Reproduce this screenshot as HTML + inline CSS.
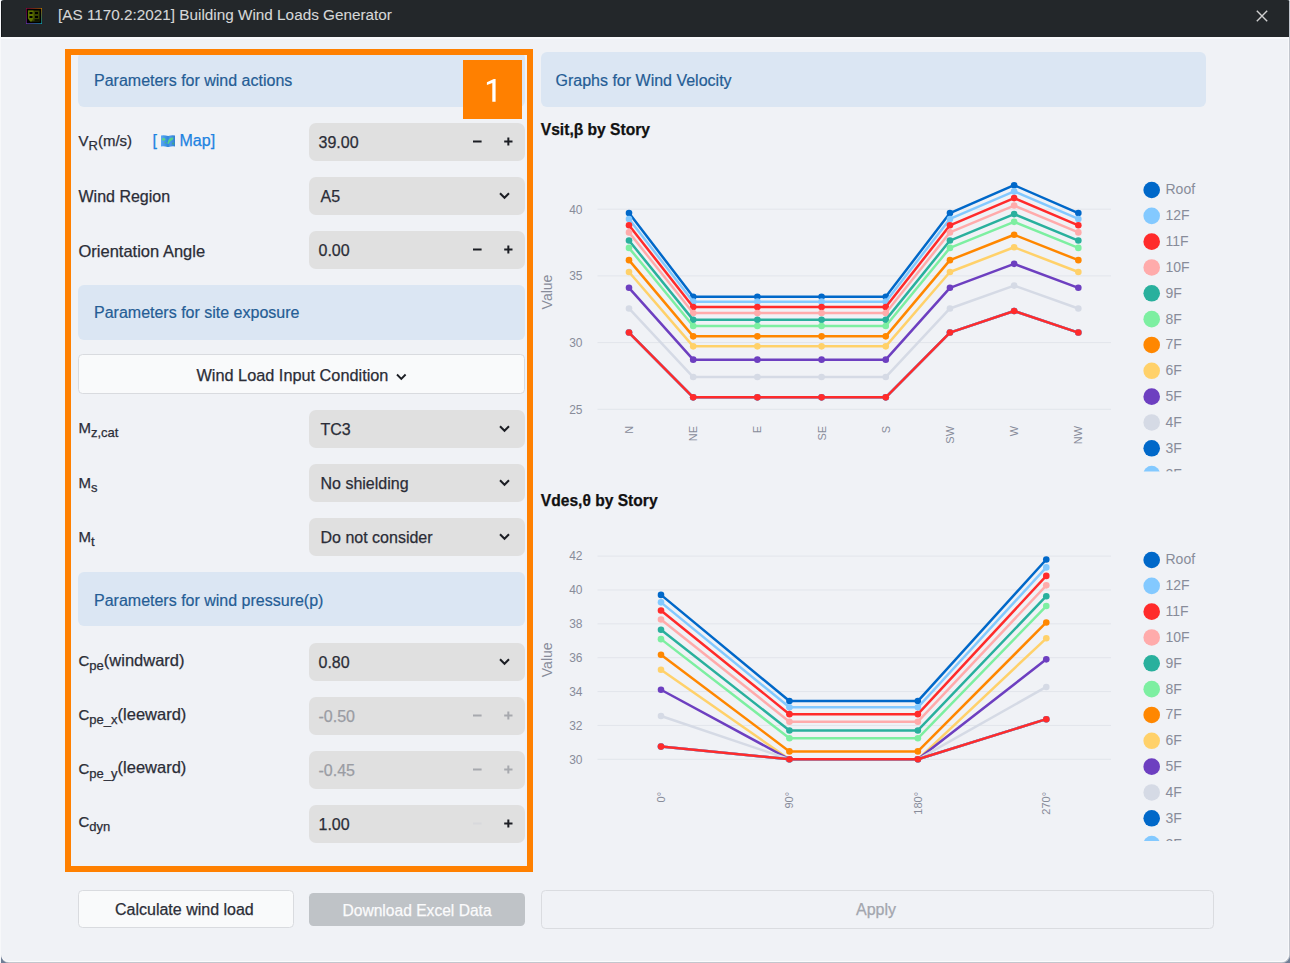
<!DOCTYPE html>
<html><head><meta charset="utf-8">
<style>
html,body{margin:0;padding:0;}
body{width:1290px;height:963px;position:relative;overflow:hidden;background:#f7f8fa;font-family:"Liberation Sans",sans-serif;}
.win{position:absolute;left:1px;top:0;width:1289px;height:963px;background:#6f7e96;border-radius:3px 3px 0 0;overflow:hidden;}
.frame{position:absolute;left:1px;top:0;width:1289px;height:963px;background:#c2c6cd;border-radius:3px 3px 8px 8px;overflow:hidden;}
.main{position:absolute;left:0;top:37px;width:1288px;height:925px;background:#f0f2f6;border-radius:0 0 8px 8px;box-shadow:inset 0 2px 0 #f8f9fb, inset 0 -1px 0 #fafbfc, inset -1px 0 0 #f8f9fb;}
.titlebar{position:absolute;left:0;top:0;width:1288px;height:37px;background:#23272a;box-shadow:inset 1px 0 0 #15181b;}
.t{position:absolute;white-space:nowrap;line-height:1;color:#2b2d37;-webkit-text-stroke:0.25px currentColor;}
.hdr{position:absolute;left:78px;width:447px;background:#dbe6f3;border-radius:6px;}
.hdr span{position:absolute;left:16px;white-space:nowrap;line-height:1;font-size:16px;color:#255d95;-webkit-text-stroke:0.2px currentColor;}
.inp{position:absolute;left:308.5px;width:216.5px;height:38px;background:#e0e0e0;border-radius:7px;}
.inp .v{position:absolute;left:10px;top:12.3px;font-size:16px;line-height:1;color:#2b2d37;-webkit-text-stroke:0.25px currentColor;white-space:nowrap;}
.inp .dis{color:#9a9ca3;}
.lab{position:absolute;left:78.5px;white-space:nowrap;line-height:1;color:#2b2d37;font-size:15px;-webkit-text-stroke:0.25px currentColor;}
.lab sub{font-size:13px;vertical-align:baseline;position:relative;top:4px;}
.pr{font-size:16.5px;position:relative;top:-0.3px;}
.btn{position:absolute;border-radius:4.5px;box-sizing:border-box;}
</style></head>
<body>
<div class="win"></div>
<div class="frame">
  <div class="titlebar"></div>
  <div class="main"></div>
</div>
<!-- title icon -->
<svg style="position:absolute;left:26px;top:8px" width="16" height="16" viewBox="0 0 16 16">
  <defs><linearGradient id="igt" x1="0" y1="0" x2="1" y2="0"><stop offset="0" stop-color="#9a0040"/><stop offset="1" stop-color="#c87a00"/></linearGradient>
  <linearGradient id="igr" x1="0" y1="0" x2="0" y2="1"><stop offset="0" stop-color="#c87a00"/><stop offset="1" stop-color="#00a0a8"/></linearGradient>
  <linearGradient id="igb" x1="0" y1="0" x2="1" y2="0"><stop offset="0" stop-color="#6a30b0"/><stop offset="1" stop-color="#10a0b8"/></linearGradient>
  <linearGradient id="igl" x1="0" y1="0" x2="0" y2="1"><stop offset="0" stop-color="#9a0040"/><stop offset="1" stop-color="#6a30b0"/></linearGradient></defs>
  <rect x="0" y="0" width="16" height="16" rx="1" fill="#000"/>
  <rect x="0" y="0" width="16" height="0.9" fill="url(#igt)" opacity="0.7"/>
  <rect x="15.1" y="0" width="0.9" height="16" fill="url(#igr)" opacity="0.8"/>
  <rect x="0" y="15.1" width="16" height="0.9" fill="url(#igb)" opacity="0.8"/>
  <rect x="0" y="0" width="0.9" height="16" fill="url(#igl)" opacity="0.7"/>
  <path d="M2 2.5H13.5V13.5H2z" fill="#384400"/>
  <path d="M2 2.5H7.5V10L5.5 13.5H2z" fill="#5e7400"/>
  <rect x="3.5" y="4" width="3" height="2" fill="#000"/><rect x="9" y="4" width="3" height="2" fill="#000"/>
  <rect x="3.5" y="8" width="3" height="2" fill="#000"/><rect x="9" y="8" width="3" height="2" fill="#000"/>
  <path d="M2 10.5L4.5 14H2z" fill="#000"/><rect x="8.5" y="11" width="5" height="2.5" fill="#101400"/>
</svg>
<div class="t" style="left:58px;top:7.2px;font-size:15.3px;color:#d6d7d8;-webkit-text-stroke:0.1px currentColor;">[AS 1170.2:2021] Building Wind Loads Generator</div>
<svg style="position:absolute;left:1256px;top:10px" width="12" height="12" viewBox="0 0 12 12"><path d="M0.8 0.8L11.2 11.2M11.2 0.8L0.8 11.2" stroke="#d0d0d0" stroke-width="1.4"/></svg>

<!-- left panel -->
<div class="hdr" style="top:52px;height:55px;"><span style="top:20.9px;">Parameters for wind actions</span></div>

<div class="lab" style="top:133.4px;">V<sub>R</sub>(m/s)</div>
<div class="t" style="left:152.5px;top:132.6px;font-size:16px;color:#1c83e1;">[</div>
<svg style="position:absolute;left:161px;top:134.8px" width="14" height="12.5" viewBox="0 0 14 12.5"><defs><linearGradient id="mg" x1="0" y1="0" x2="1" y2="0"><stop offset="0" stop-color="#5aa8f6"/><stop offset="0.5" stop-color="#2f88da"/><stop offset="0.65" stop-color="#4d98ec"/><stop offset="1" stop-color="#2f7fd0"/></linearGradient></defs><path d="M0 0.4Q3.5 -0.3 7.2 1Q10.5 -0.3 14 0.4V11.4Q10.5 10.8 7.2 12.3Q3.5 10.8 0 11.4Z" fill="url(#mg)"/><ellipse cx="2.6" cy="4.2" rx="1.7" ry="1.5" fill="#5cd08e"/><ellipse cx="4.4" cy="7.8" rx="0.9" ry="0.8" fill="#48b888"/><path d="M6.3 8.5Q6.5 5 9 3.2Q11 2.2 12.4 2.8Q12.5 5 10.5 5.6Q8.5 6.5 7.6 8.9Z" fill="#58d28a"/><ellipse cx="12.2" cy="8.6" rx="1.2" ry="1.1" fill="#3aa890"/></svg>
<div class="t" style="left:179.5px;top:132.6px;font-size:16px;color:#1c83e1;">Map]</div>
<div class="inp" style="top:123px;"><div class="v">39.00</div><svg style="position:absolute;right:12px;top:14px" width="40" height="9" viewBox="0 0 40 9"><path d="M0 4.5h8.6" stroke="#1c1e24" stroke-width="2"/><path d="M31.2 4.5h8.3M35.35 0.6v7.8" stroke="#1c1e24" stroke-width="2"/></svg></div>

<div class="t" style="left:78.5px;top:189.4px;font-size:16px;">Wind Region</div>
<div class="inp" style="top:177px;"><div class="v" style="left:12px">A5</div><svg style="position:absolute;left:190.8px;top:15.2px" width="11" height="8" viewBox="0 0 11 8"><path d="M1 1.3L5.5 5.8L10 1.3" fill="none" stroke="#1c1e24" stroke-width="2"/></svg></div>

<div class="t" style="left:78.5px;top:242.7px;font-size:16.5px;">Orientation Angle</div>
<div class="inp" style="top:231px;"><div class="v">0.00</div><svg style="position:absolute;right:12px;top:14px" width="40" height="9" viewBox="0 0 40 9"><path d="M0 4.5h8.6" stroke="#1c1e24" stroke-width="2"/><path d="M31.2 4.5h8.3M35.35 0.6v7.8" stroke="#1c1e24" stroke-width="2"/></svg></div>

<div class="hdr" style="top:285px;height:54.5px;"><span style="top:20.4px;">Parameters for site exposure</span></div>

<div class="btn" style="left:78px;top:354.3px;width:447px;height:39.3px;background:#f9fafb;border:1px solid #d9dbdf;"></div>
<div class="t" style="left:196.5px;top:367.4px;font-size:16.3px;">Wind Load Input Condition</div>
<svg style="position:absolute;left:395.8px;top:372.6px" width="11" height="8" viewBox="0 0 11 8"><path d="M1 1.5L5.3 5.8L9.6 1.5" fill="none" stroke="#1c1e24" stroke-width="1.9"/></svg>

<div class="lab" style="top:420.3px;">M<sub>z,cat</sub></div>
<div class="inp" style="top:409.5px;"><div class="v" style="left:12px">TC3</div><svg style="position:absolute;left:190.8px;top:15.2px" width="11" height="8" viewBox="0 0 11 8"><path d="M1 1.3L5.5 5.8L10 1.3" fill="none" stroke="#1c1e24" stroke-width="2"/></svg></div>
<div class="lab" style="top:474.7px;">M<sub>s</sub></div>
<div class="inp" style="top:463.5px;"><div class="v" style="left:12px">No shielding</div><svg style="position:absolute;left:190.8px;top:15.2px" width="11" height="8" viewBox="0 0 11 8"><path d="M1 1.3L5.5 5.8L10 1.3" fill="none" stroke="#1c1e24" stroke-width="2"/></svg></div>
<div class="lab" style="top:528.5px;">M<sub>t</sub></div>
<div class="inp" style="top:518px;"><div class="v" style="left:12px">Do not consider</div><svg style="position:absolute;left:190.8px;top:15.2px" width="11" height="8" viewBox="0 0 11 8"><path d="M1 1.3L5.5 5.8L10 1.3" fill="none" stroke="#1c1e24" stroke-width="2"/></svg></div>

<div class="hdr" style="top:572.3px;height:54px;"><span style="top:20.3px;">Parameters for wind pressure(p)</span></div>

<div class="lab" style="top:652px;">C<sub>pe</sub><span class="pr">(windward)</span></div>
<div class="inp" style="top:642.6px;"><div class="v">0.80</div><svg style="position:absolute;left:190.8px;top:15.2px" width="11" height="8" viewBox="0 0 11 8"><path d="M1 1.3L5.5 5.8L10 1.3" fill="none" stroke="#1c1e24" stroke-width="2"/></svg></div>
<div class="lab" style="top:705.8px;">C<sub>pe_x</sub><span class="pr">(leeward)</span></div>
<div class="inp" style="top:696.6px;"><div class="v dis">-0.50</div><svg style="position:absolute;right:12px;top:14px" width="40" height="9" viewBox="0 0 40 9"><path d="M0 4.5h8.6" stroke="#a7a9ae" stroke-width="2"/><path d="M31.2 4.5h8.3M35.35 0.6v7.8" stroke="#a7a9ae" stroke-width="2"/></svg></div>
<div class="lab" style="top:759.5px;">C<sub>pe_y</sub><span class="pr">(leeward)</span></div>
<div class="inp" style="top:750.9px;"><div class="v dis">-0.45</div><svg style="position:absolute;right:12px;top:14px" width="40" height="9" viewBox="0 0 40 9"><path d="M0 4.5h8.6" stroke="#a7a9ae" stroke-width="2"/><path d="M31.2 4.5h8.3M35.35 0.6v7.8" stroke="#a7a9ae" stroke-width="2"/></svg></div>
<div class="lab" style="top:814px;">C<sub>dyn</sub></div>
<div class="inp" style="top:804.8px;"><div class="v">1.00</div><svg style="position:absolute;right:12px;top:14px" width="40" height="9" viewBox="0 0 40 9"><path d="M0 4.5h8.6" stroke="#d8d9dc" stroke-width="2"/><path d="M31.2 4.5h8.3M35.35 0.6v7.8" stroke="#1c1e24" stroke-width="2"/></svg></div>

<!-- orange frame -->
<div style="position:absolute;left:65px;top:49px;width:456px;height:811px;border:6px solid #ff8000;"></div>
<div style="position:absolute;left:463px;top:60px;width:59px;height:59px;background:#ff8000;"></div>
<svg style="position:absolute;left:0;top:0" width="600" height="120"><path d="M486.9 82.3L493.8 78.9H495.6V101.7H492.3V82.9L486.9 85.1Z" fill="#fff"/></svg>

<!-- bottom buttons -->
<div class="btn" style="left:78px;top:889.8px;width:215.5px;height:38.6px;background:#f9fafb;border:1px solid #d9dbdf;"></div>
<div class="t" style="left:115px;top:901.5px;font-size:16px;">Calculate wind load</div>
<div class="btn" style="left:308.5px;top:893px;width:216.5px;height:33px;background:#bfc3c7;"></div>
<div class="t" style="left:342.5px;top:903px;font-size:15.6px;color:#fbfbfc;">Download Excel Data</div>
<div class="btn" style="left:540.5px;top:889.5px;width:673px;height:39px;border:1px solid #dadce0;"></div>
<div class="t" style="left:856px;top:901.5px;font-size:16px;color:#a3a6ae;">Apply</div>

<!-- right panel -->
<div class="hdr" style="left:540.5px;top:52px;width:665px;height:55px;"><span style="left:15px;top:20.9px;">Graphs for Wind Velocity</span></div>
<div class="t" style="left:540.8px;top:121.7px;font-size:15.6px;font-weight:bold;color:#111;">Vsit,β by Story</div>
<div class="t" style="left:540.8px;top:492.5px;font-size:15.6px;font-weight:bold;color:#111;">Vdes,θ by Story</div>

<svg width="1290" height="963" viewBox="0 0 1290 963" style="position:absolute;left:0;top:0" font-family='"Liberation Sans", sans-serif'>
<line x1="597.5" x2="1111" y1="409.30" y2="409.30" stroke="#e2e5eb" stroke-width="1"/>
<text x="582.5" y="413.60" text-anchor="end" font-size="12" fill="#888c9a">25</text>
<line x1="597.5" x2="1111" y1="342.60" y2="342.60" stroke="#e2e5eb" stroke-width="1"/>
<text x="582.5" y="346.90" text-anchor="end" font-size="12" fill="#888c9a">30</text>
<line x1="597.5" x2="1111" y1="275.90" y2="275.90" stroke="#e2e5eb" stroke-width="1"/>
<text x="582.5" y="280.20" text-anchor="end" font-size="12" fill="#888c9a">35</text>
<line x1="597.5" x2="1111" y1="209.20" y2="209.20" stroke="#e2e5eb" stroke-width="1"/>
<text x="582.5" y="213.50" text-anchor="end" font-size="12" fill="#888c9a">40</text>
<text transform="translate(551.5,292) rotate(-90)" text-anchor="middle" font-size="14" fill="#888c9a">Value</text>
<text transform="translate(633.00,425.9) rotate(-90)" text-anchor="end" font-size="11" fill="#888c9a">N</text>
<text transform="translate(697.19,425.9) rotate(-90)" text-anchor="end" font-size="11" fill="#888c9a">NE</text>
<text transform="translate(761.38,425.9) rotate(-90)" text-anchor="end" font-size="11" fill="#888c9a">E</text>
<text transform="translate(825.57,425.9) rotate(-90)" text-anchor="end" font-size="11" fill="#888c9a">SE</text>
<text transform="translate(889.76,425.9) rotate(-90)" text-anchor="end" font-size="11" fill="#888c9a">S</text>
<text transform="translate(953.95,425.9) rotate(-90)" text-anchor="end" font-size="11" fill="#888c9a">SW</text>
<text transform="translate(1018.14,425.9) rotate(-90)" text-anchor="end" font-size="11" fill="#888c9a">W</text>
<text transform="translate(1082.33,425.9) rotate(-90)" text-anchor="end" font-size="11" fill="#888c9a">NW</text>
<polyline points="629.00,213.07 693.19,296.71 757.38,296.71 821.57,296.71 885.76,296.71 949.95,213.07 1014.14,185.19 1078.33,213.07" fill="none" stroke="#0068c9" stroke-width="2.5" stroke-linejoin="round"/>
<circle cx="629.00" cy="213.07" r="3.3" fill="#0068c9"/>
<circle cx="693.19" cy="296.71" r="3.3" fill="#0068c9"/>
<circle cx="757.38" cy="296.71" r="3.3" fill="#0068c9"/>
<circle cx="821.57" cy="296.71" r="3.3" fill="#0068c9"/>
<circle cx="885.76" cy="296.71" r="3.3" fill="#0068c9"/>
<circle cx="949.95" cy="213.07" r="3.3" fill="#0068c9"/>
<circle cx="1014.14" cy="185.19" r="3.3" fill="#0068c9"/>
<circle cx="1078.33" cy="213.07" r="3.3" fill="#0068c9"/>
<polyline points="629.00,218.95 693.19,301.66 757.38,301.66 821.57,301.66 885.76,301.66 949.95,218.95 1014.14,191.38 1078.33,218.95" fill="none" stroke="#83c9ff" stroke-width="2.5" stroke-linejoin="round"/>
<circle cx="629.00" cy="218.95" r="3.3" fill="#83c9ff"/>
<circle cx="693.19" cy="301.66" r="3.3" fill="#83c9ff"/>
<circle cx="757.38" cy="301.66" r="3.3" fill="#83c9ff"/>
<circle cx="821.57" cy="301.66" r="3.3" fill="#83c9ff"/>
<circle cx="885.76" cy="301.66" r="3.3" fill="#83c9ff"/>
<circle cx="949.95" cy="218.95" r="3.3" fill="#83c9ff"/>
<circle cx="1014.14" cy="191.38" r="3.3" fill="#83c9ff"/>
<circle cx="1078.33" cy="218.95" r="3.3" fill="#83c9ff"/>
<polyline points="629.00,225.32 693.19,307.03 757.38,307.03 821.57,307.03 885.76,307.03 949.95,225.32 1014.14,198.09 1078.33,225.32" fill="none" stroke="#ff2b2b" stroke-width="2.5" stroke-linejoin="round"/>
<circle cx="629.00" cy="225.32" r="3.3" fill="#ff2b2b"/>
<circle cx="693.19" cy="307.03" r="3.3" fill="#ff2b2b"/>
<circle cx="757.38" cy="307.03" r="3.3" fill="#ff2b2b"/>
<circle cx="821.57" cy="307.03" r="3.3" fill="#ff2b2b"/>
<circle cx="885.76" cy="307.03" r="3.3" fill="#ff2b2b"/>
<circle cx="949.95" cy="225.32" r="3.3" fill="#ff2b2b"/>
<circle cx="1014.14" cy="198.09" r="3.3" fill="#ff2b2b"/>
<circle cx="1078.33" cy="225.32" r="3.3" fill="#ff2b2b"/>
<polyline points="629.00,232.39 693.19,312.98 757.38,312.98 821.57,312.98 885.76,312.98 949.95,232.39 1014.14,205.53 1078.33,232.39" fill="none" stroke="#ffabab" stroke-width="2.5" stroke-linejoin="round"/>
<circle cx="629.00" cy="232.39" r="3.3" fill="#ffabab"/>
<circle cx="693.19" cy="312.98" r="3.3" fill="#ffabab"/>
<circle cx="757.38" cy="312.98" r="3.3" fill="#ffabab"/>
<circle cx="821.57" cy="312.98" r="3.3" fill="#ffabab"/>
<circle cx="885.76" cy="312.98" r="3.3" fill="#ffabab"/>
<circle cx="949.95" cy="232.39" r="3.3" fill="#ffabab"/>
<circle cx="1014.14" cy="205.53" r="3.3" fill="#ffabab"/>
<circle cx="1078.33" cy="232.39" r="3.3" fill="#ffabab"/>
<polyline points="629.00,240.55 693.19,319.85 757.38,319.85 821.57,319.85 885.76,319.85 949.95,240.55 1014.14,214.11 1078.33,240.55" fill="none" stroke="#29b09d" stroke-width="2.5" stroke-linejoin="round"/>
<circle cx="629.00" cy="240.55" r="3.3" fill="#29b09d"/>
<circle cx="693.19" cy="319.85" r="3.3" fill="#29b09d"/>
<circle cx="757.38" cy="319.85" r="3.3" fill="#29b09d"/>
<circle cx="821.57" cy="319.85" r="3.3" fill="#29b09d"/>
<circle cx="885.76" cy="319.85" r="3.3" fill="#29b09d"/>
<circle cx="949.95" cy="240.55" r="3.3" fill="#29b09d"/>
<circle cx="1014.14" cy="214.11" r="3.3" fill="#29b09d"/>
<circle cx="1078.33" cy="240.55" r="3.3" fill="#29b09d"/>
<polyline points="629.00,247.91 693.19,326.05 757.38,326.05 821.57,326.05 885.76,326.05 949.95,247.91 1014.14,221.86 1078.33,247.91" fill="none" stroke="#7defa1" stroke-width="2.5" stroke-linejoin="round"/>
<circle cx="629.00" cy="247.91" r="3.3" fill="#7defa1"/>
<circle cx="693.19" cy="326.05" r="3.3" fill="#7defa1"/>
<circle cx="757.38" cy="326.05" r="3.3" fill="#7defa1"/>
<circle cx="821.57" cy="326.05" r="3.3" fill="#7defa1"/>
<circle cx="885.76" cy="326.05" r="3.3" fill="#7defa1"/>
<circle cx="949.95" cy="247.91" r="3.3" fill="#7defa1"/>
<circle cx="1014.14" cy="221.86" r="3.3" fill="#7defa1"/>
<circle cx="1078.33" cy="247.91" r="3.3" fill="#7defa1"/>
<polyline points="629.00,260.17 693.19,336.37 757.38,336.37 821.57,336.37 885.76,336.37 949.95,260.17 1014.14,234.77 1078.33,260.17" fill="none" stroke="#ff8700" stroke-width="2.5" stroke-linejoin="round"/>
<circle cx="629.00" cy="260.17" r="3.3" fill="#ff8700"/>
<circle cx="693.19" cy="336.37" r="3.3" fill="#ff8700"/>
<circle cx="757.38" cy="336.37" r="3.3" fill="#ff8700"/>
<circle cx="821.57" cy="336.37" r="3.3" fill="#ff8700"/>
<circle cx="885.76" cy="336.37" r="3.3" fill="#ff8700"/>
<circle cx="949.95" cy="260.17" r="3.3" fill="#ff8700"/>
<circle cx="1014.14" cy="234.77" r="3.3" fill="#ff8700"/>
<circle cx="1078.33" cy="260.17" r="3.3" fill="#ff8700"/>
<polyline points="629.00,272.03 693.19,346.36 757.38,346.36 821.57,346.36 885.76,346.36 949.95,272.03 1014.14,247.25 1078.33,272.03" fill="none" stroke="#ffd16a" stroke-width="2.5" stroke-linejoin="round"/>
<circle cx="629.00" cy="272.03" r="3.3" fill="#ffd16a"/>
<circle cx="693.19" cy="346.36" r="3.3" fill="#ffd16a"/>
<circle cx="757.38" cy="346.36" r="3.3" fill="#ffd16a"/>
<circle cx="821.57" cy="346.36" r="3.3" fill="#ffd16a"/>
<circle cx="885.76" cy="346.36" r="3.3" fill="#ffd16a"/>
<circle cx="949.95" cy="272.03" r="3.3" fill="#ffd16a"/>
<circle cx="1014.14" cy="247.25" r="3.3" fill="#ffd16a"/>
<circle cx="1078.33" cy="272.03" r="3.3" fill="#ffd16a"/>
<polyline points="629.00,287.80 693.19,359.64 757.38,359.64 821.57,359.64 885.76,359.64 949.95,287.80 1014.14,263.85 1078.33,287.80" fill="none" stroke="#6d3fc0" stroke-width="2.5" stroke-linejoin="round"/>
<circle cx="629.00" cy="287.80" r="3.3" fill="#6d3fc0"/>
<circle cx="693.19" cy="359.64" r="3.3" fill="#6d3fc0"/>
<circle cx="757.38" cy="359.64" r="3.3" fill="#6d3fc0"/>
<circle cx="821.57" cy="359.64" r="3.3" fill="#6d3fc0"/>
<circle cx="885.76" cy="359.64" r="3.3" fill="#6d3fc0"/>
<circle cx="949.95" cy="287.80" r="3.3" fill="#6d3fc0"/>
<circle cx="1014.14" cy="263.85" r="3.3" fill="#6d3fc0"/>
<circle cx="1078.33" cy="287.80" r="3.3" fill="#6d3fc0"/>
<polyline points="629.00,308.46 693.19,377.04 757.38,377.04 821.57,377.04 885.76,377.04 949.95,308.46 1014.14,285.60 1078.33,308.46" fill="none" stroke="#d5dae5" stroke-width="2.5" stroke-linejoin="round"/>
<circle cx="629.00" cy="308.46" r="3.3" fill="#d5dae5"/>
<circle cx="693.19" cy="377.04" r="3.3" fill="#d5dae5"/>
<circle cx="757.38" cy="377.04" r="3.3" fill="#d5dae5"/>
<circle cx="821.57" cy="377.04" r="3.3" fill="#d5dae5"/>
<circle cx="885.76" cy="377.04" r="3.3" fill="#d5dae5"/>
<circle cx="949.95" cy="308.46" r="3.3" fill="#d5dae5"/>
<circle cx="1014.14" cy="285.60" r="3.3" fill="#d5dae5"/>
<circle cx="1078.33" cy="308.46" r="3.3" fill="#d5dae5"/>
<polyline points="629.00,332.57 693.19,397.35 757.38,397.35 821.57,397.35 885.76,397.35 949.95,332.57 1014.14,310.98 1078.33,332.57" fill="none" stroke="#0068c9" stroke-width="2.5" stroke-linejoin="round"/>
<circle cx="629.00" cy="332.57" r="3.3" fill="#0068c9"/>
<circle cx="693.19" cy="397.35" r="3.3" fill="#0068c9"/>
<circle cx="757.38" cy="397.35" r="3.3" fill="#0068c9"/>
<circle cx="821.57" cy="397.35" r="3.3" fill="#0068c9"/>
<circle cx="885.76" cy="397.35" r="3.3" fill="#0068c9"/>
<circle cx="949.95" cy="332.57" r="3.3" fill="#0068c9"/>
<circle cx="1014.14" cy="310.98" r="3.3" fill="#0068c9"/>
<circle cx="1078.33" cy="332.57" r="3.3" fill="#0068c9"/>
<polyline points="629.00,332.57 693.19,397.35 757.38,397.35 821.57,397.35 885.76,397.35 949.95,332.57 1014.14,310.98 1078.33,332.57" fill="none" stroke="#83c9ff" stroke-width="2.5" stroke-linejoin="round"/>
<circle cx="629.00" cy="332.57" r="3.3" fill="#83c9ff"/>
<circle cx="693.19" cy="397.35" r="3.3" fill="#83c9ff"/>
<circle cx="757.38" cy="397.35" r="3.3" fill="#83c9ff"/>
<circle cx="821.57" cy="397.35" r="3.3" fill="#83c9ff"/>
<circle cx="885.76" cy="397.35" r="3.3" fill="#83c9ff"/>
<circle cx="949.95" cy="332.57" r="3.3" fill="#83c9ff"/>
<circle cx="1014.14" cy="310.98" r="3.3" fill="#83c9ff"/>
<circle cx="1078.33" cy="332.57" r="3.3" fill="#83c9ff"/>
<polyline points="629.00,332.57 693.19,397.35 757.38,397.35 821.57,397.35 885.76,397.35 949.95,332.57 1014.14,310.98 1078.33,332.57" fill="none" stroke="#ff2b2b" stroke-width="2.5" stroke-linejoin="round"/>
<circle cx="629.00" cy="332.57" r="3.3" fill="#ff2b2b"/>
<circle cx="693.19" cy="397.35" r="3.3" fill="#ff2b2b"/>
<circle cx="757.38" cy="397.35" r="3.3" fill="#ff2b2b"/>
<circle cx="821.57" cy="397.35" r="3.3" fill="#ff2b2b"/>
<circle cx="885.76" cy="397.35" r="3.3" fill="#ff2b2b"/>
<circle cx="949.95" cy="332.57" r="3.3" fill="#ff2b2b"/>
<circle cx="1014.14" cy="310.98" r="3.3" fill="#ff2b2b"/>
<circle cx="1078.33" cy="332.57" r="3.3" fill="#ff2b2b"/>
<clipPath id="lg1"><rect x="1130" y="170" width="120" height="301.5"/></clipPath>
<g clip-path="url(#lg1)">
<circle cx="1151.7" cy="190.00" r="8.3" fill="#0068c9"/>
<text x="1165.5" y="194.40" font-size="14" fill="#888c9a">Roof</text>
<circle cx="1151.7" cy="215.83" r="8.3" fill="#83c9ff"/>
<text x="1165.5" y="220.23" font-size="14" fill="#888c9a">12F</text>
<circle cx="1151.7" cy="241.66" r="8.3" fill="#ff2b2b"/>
<text x="1165.5" y="246.06" font-size="14" fill="#888c9a">11F</text>
<circle cx="1151.7" cy="267.49" r="8.3" fill="#ffabab"/>
<text x="1165.5" y="271.89" font-size="14" fill="#888c9a">10F</text>
<circle cx="1151.7" cy="293.32" r="8.3" fill="#29b09d"/>
<text x="1165.5" y="297.72" font-size="14" fill="#888c9a">9F</text>
<circle cx="1151.7" cy="319.15" r="8.3" fill="#7defa1"/>
<text x="1165.5" y="323.55" font-size="14" fill="#888c9a">8F</text>
<circle cx="1151.7" cy="344.98" r="8.3" fill="#ff8700"/>
<text x="1165.5" y="349.38" font-size="14" fill="#888c9a">7F</text>
<circle cx="1151.7" cy="370.81" r="8.3" fill="#ffd16a"/>
<text x="1165.5" y="375.21" font-size="14" fill="#888c9a">6F</text>
<circle cx="1151.7" cy="396.64" r="8.3" fill="#6d3fc0"/>
<text x="1165.5" y="401.04" font-size="14" fill="#888c9a">5F</text>
<circle cx="1151.7" cy="422.47" r="8.3" fill="#d5dae5"/>
<text x="1165.5" y="426.87" font-size="14" fill="#888c9a">4F</text>
<circle cx="1151.7" cy="448.30" r="8.3" fill="#0068c9"/>
<text x="1165.5" y="452.70" font-size="14" fill="#888c9a">3F</text>
<circle cx="1151.7" cy="474.13" r="8.3" fill="#83c9ff"/>
<text x="1165.5" y="478.53" font-size="14" fill="#888c9a">2F</text>
<circle cx="1151.7" cy="499.96" r="8.3" fill="#ff2b2b"/>
<text x="1165.5" y="504.36" font-size="14" fill="#888c9a">1F</text>
</g>
<line x1="597.5" x2="1111" y1="759.30" y2="759.30" stroke="#e2e5eb" stroke-width="1"/>
<text x="582.5" y="763.60" text-anchor="end" font-size="12" fill="#888c9a">30</text>
<line x1="597.5" x2="1111" y1="725.44" y2="725.44" stroke="#e2e5eb" stroke-width="1"/>
<text x="582.5" y="729.74" text-anchor="end" font-size="12" fill="#888c9a">32</text>
<line x1="597.5" x2="1111" y1="691.58" y2="691.58" stroke="#e2e5eb" stroke-width="1"/>
<text x="582.5" y="695.88" text-anchor="end" font-size="12" fill="#888c9a">34</text>
<line x1="597.5" x2="1111" y1="657.72" y2="657.72" stroke="#e2e5eb" stroke-width="1"/>
<text x="582.5" y="662.02" text-anchor="end" font-size="12" fill="#888c9a">36</text>
<line x1="597.5" x2="1111" y1="623.86" y2="623.86" stroke="#e2e5eb" stroke-width="1"/>
<text x="582.5" y="628.16" text-anchor="end" font-size="12" fill="#888c9a">38</text>
<line x1="597.5" x2="1111" y1="590.00" y2="590.00" stroke="#e2e5eb" stroke-width="1"/>
<text x="582.5" y="594.30" text-anchor="end" font-size="12" fill="#888c9a">40</text>
<line x1="597.5" x2="1111" y1="556.14" y2="556.14" stroke="#e2e5eb" stroke-width="1"/>
<text x="582.5" y="560.44" text-anchor="end" font-size="12" fill="#888c9a">42</text>
<text transform="translate(551.5,659.8) rotate(-90)" text-anchor="middle" font-size="14" fill="#888c9a">Value</text>
<text transform="translate(665.00,791.9) rotate(-90)" text-anchor="end" font-size="11" fill="#888c9a">0°</text>
<text transform="translate(793.43,791.9) rotate(-90)" text-anchor="end" font-size="11" fill="#888c9a">90°</text>
<text transform="translate(921.86,791.9) rotate(-90)" text-anchor="end" font-size="11" fill="#888c9a">180°</text>
<text transform="translate(1050.29,791.9) rotate(-90)" text-anchor="end" font-size="11" fill="#888c9a">270°</text>
<polyline points="661.00,594.91 789.43,701.06 917.86,701.06 1046.29,559.52" fill="none" stroke="#0068c9" stroke-width="2.5" stroke-linejoin="round"/>
<circle cx="661.00" cy="594.91" r="3.3" fill="#0068c9"/>
<circle cx="789.43" cy="701.06" r="3.3" fill="#0068c9"/>
<circle cx="917.86" cy="701.06" r="3.3" fill="#0068c9"/>
<circle cx="1046.29" cy="559.52" r="3.3" fill="#0068c9"/>
<polyline points="661.00,602.37 789.43,707.34 917.86,707.34 1046.29,567.38" fill="none" stroke="#83c9ff" stroke-width="2.5" stroke-linejoin="round"/>
<circle cx="661.00" cy="602.37" r="3.3" fill="#83c9ff"/>
<circle cx="789.43" cy="707.34" r="3.3" fill="#83c9ff"/>
<circle cx="917.86" cy="707.34" r="3.3" fill="#83c9ff"/>
<circle cx="1046.29" cy="567.38" r="3.3" fill="#83c9ff"/>
<polyline points="661.00,610.46 789.43,714.16 917.86,714.16 1046.29,575.90" fill="none" stroke="#ff2b2b" stroke-width="2.5" stroke-linejoin="round"/>
<circle cx="661.00" cy="610.46" r="3.3" fill="#ff2b2b"/>
<circle cx="789.43" cy="714.16" r="3.3" fill="#ff2b2b"/>
<circle cx="917.86" cy="714.16" r="3.3" fill="#ff2b2b"/>
<circle cx="1046.29" cy="575.90" r="3.3" fill="#ff2b2b"/>
<polyline points="661.00,619.43 789.43,721.71 917.86,721.71 1046.29,585.34" fill="none" stroke="#ffabab" stroke-width="2.5" stroke-linejoin="round"/>
<circle cx="661.00" cy="619.43" r="3.3" fill="#ffabab"/>
<circle cx="789.43" cy="721.71" r="3.3" fill="#ffabab"/>
<circle cx="917.86" cy="721.71" r="3.3" fill="#ffabab"/>
<circle cx="1046.29" cy="585.34" r="3.3" fill="#ffabab"/>
<polyline points="661.00,629.78 789.43,730.43 917.86,730.43 1046.29,596.23" fill="none" stroke="#29b09d" stroke-width="2.5" stroke-linejoin="round"/>
<circle cx="661.00" cy="629.78" r="3.3" fill="#29b09d"/>
<circle cx="789.43" cy="730.43" r="3.3" fill="#29b09d"/>
<circle cx="917.86" cy="730.43" r="3.3" fill="#29b09d"/>
<circle cx="1046.29" cy="596.23" r="3.3" fill="#29b09d"/>
<polyline points="661.00,639.13 789.43,738.30 917.86,738.30 1046.29,606.07" fill="none" stroke="#7defa1" stroke-width="2.5" stroke-linejoin="round"/>
<circle cx="661.00" cy="639.13" r="3.3" fill="#7defa1"/>
<circle cx="789.43" cy="738.30" r="3.3" fill="#7defa1"/>
<circle cx="917.86" cy="738.30" r="3.3" fill="#7defa1"/>
<circle cx="1046.29" cy="606.07" r="3.3" fill="#7defa1"/>
<polyline points="661.00,654.68 789.43,751.40 917.86,751.40 1046.29,622.45" fill="none" stroke="#ff8700" stroke-width="2.5" stroke-linejoin="round"/>
<circle cx="661.00" cy="654.68" r="3.3" fill="#ff8700"/>
<circle cx="789.43" cy="751.40" r="3.3" fill="#ff8700"/>
<circle cx="917.86" cy="751.40" r="3.3" fill="#ff8700"/>
<circle cx="1046.29" cy="622.45" r="3.3" fill="#ff8700"/>
<polyline points="661.00,669.74 789.43,759.30 917.86,759.30 1046.29,638.29" fill="none" stroke="#ffd16a" stroke-width="2.5" stroke-linejoin="round"/>
<circle cx="661.00" cy="669.74" r="3.3" fill="#ffd16a"/>
<circle cx="789.43" cy="759.30" r="3.3" fill="#ffd16a"/>
<circle cx="917.86" cy="759.30" r="3.3" fill="#ffd16a"/>
<circle cx="1046.29" cy="638.29" r="3.3" fill="#ffd16a"/>
<polyline points="661.00,689.75 789.43,759.30 917.86,759.30 1046.29,659.36" fill="none" stroke="#6d3fc0" stroke-width="2.5" stroke-linejoin="round"/>
<circle cx="661.00" cy="689.75" r="3.3" fill="#6d3fc0"/>
<circle cx="789.43" cy="759.30" r="3.3" fill="#6d3fc0"/>
<circle cx="917.86" cy="759.30" r="3.3" fill="#6d3fc0"/>
<circle cx="1046.29" cy="659.36" r="3.3" fill="#6d3fc0"/>
<polyline points="661.00,715.97 789.43,759.30 917.86,759.30 1046.29,686.95" fill="none" stroke="#d5dae5" stroke-width="2.5" stroke-linejoin="round"/>
<circle cx="661.00" cy="715.97" r="3.3" fill="#d5dae5"/>
<circle cx="789.43" cy="759.30" r="3.3" fill="#d5dae5"/>
<circle cx="917.86" cy="759.30" r="3.3" fill="#d5dae5"/>
<circle cx="1046.29" cy="686.95" r="3.3" fill="#d5dae5"/>
<polyline points="661.00,746.58 789.43,759.30 917.86,759.30 1046.29,719.18" fill="none" stroke="#0068c9" stroke-width="2.5" stroke-linejoin="round"/>
<circle cx="661.00" cy="746.58" r="3.3" fill="#0068c9"/>
<circle cx="789.43" cy="759.30" r="3.3" fill="#0068c9"/>
<circle cx="917.86" cy="759.30" r="3.3" fill="#0068c9"/>
<circle cx="1046.29" cy="719.18" r="3.3" fill="#0068c9"/>
<polyline points="661.00,746.58 789.43,759.30 917.86,759.30 1046.29,719.18" fill="none" stroke="#83c9ff" stroke-width="2.5" stroke-linejoin="round"/>
<circle cx="661.00" cy="746.58" r="3.3" fill="#83c9ff"/>
<circle cx="789.43" cy="759.30" r="3.3" fill="#83c9ff"/>
<circle cx="917.86" cy="759.30" r="3.3" fill="#83c9ff"/>
<circle cx="1046.29" cy="719.18" r="3.3" fill="#83c9ff"/>
<polyline points="661.00,746.58 789.43,759.30 917.86,759.30 1046.29,719.18" fill="none" stroke="#ff2b2b" stroke-width="2.5" stroke-linejoin="round"/>
<circle cx="661.00" cy="746.58" r="3.3" fill="#ff2b2b"/>
<circle cx="789.43" cy="759.30" r="3.3" fill="#ff2b2b"/>
<circle cx="917.86" cy="759.30" r="3.3" fill="#ff2b2b"/>
<circle cx="1046.29" cy="719.18" r="3.3" fill="#ff2b2b"/>
<clipPath id="lg2"><rect x="1130" y="540" width="120" height="301"/></clipPath>
<g clip-path="url(#lg2)">
<circle cx="1151.7" cy="560.00" r="8.3" fill="#0068c9"/>
<text x="1165.5" y="564.40" font-size="14" fill="#888c9a">Roof</text>
<circle cx="1151.7" cy="585.83" r="8.3" fill="#83c9ff"/>
<text x="1165.5" y="590.23" font-size="14" fill="#888c9a">12F</text>
<circle cx="1151.7" cy="611.66" r="8.3" fill="#ff2b2b"/>
<text x="1165.5" y="616.06" font-size="14" fill="#888c9a">11F</text>
<circle cx="1151.7" cy="637.49" r="8.3" fill="#ffabab"/>
<text x="1165.5" y="641.89" font-size="14" fill="#888c9a">10F</text>
<circle cx="1151.7" cy="663.32" r="8.3" fill="#29b09d"/>
<text x="1165.5" y="667.72" font-size="14" fill="#888c9a">9F</text>
<circle cx="1151.7" cy="689.15" r="8.3" fill="#7defa1"/>
<text x="1165.5" y="693.55" font-size="14" fill="#888c9a">8F</text>
<circle cx="1151.7" cy="714.98" r="8.3" fill="#ff8700"/>
<text x="1165.5" y="719.38" font-size="14" fill="#888c9a">7F</text>
<circle cx="1151.7" cy="740.81" r="8.3" fill="#ffd16a"/>
<text x="1165.5" y="745.21" font-size="14" fill="#888c9a">6F</text>
<circle cx="1151.7" cy="766.64" r="8.3" fill="#6d3fc0"/>
<text x="1165.5" y="771.04" font-size="14" fill="#888c9a">5F</text>
<circle cx="1151.7" cy="792.47" r="8.3" fill="#d5dae5"/>
<text x="1165.5" y="796.87" font-size="14" fill="#888c9a">4F</text>
<circle cx="1151.7" cy="818.30" r="8.3" fill="#0068c9"/>
<text x="1165.5" y="822.70" font-size="14" fill="#888c9a">3F</text>
<circle cx="1151.7" cy="844.13" r="8.3" fill="#83c9ff"/>
<text x="1165.5" y="848.53" font-size="14" fill="#888c9a">2F</text>
<circle cx="1151.7" cy="869.96" r="8.3" fill="#ff2b2b"/>
<text x="1165.5" y="874.36" font-size="14" fill="#888c9a">1F</text>
</g>
</svg>
</body></html>
